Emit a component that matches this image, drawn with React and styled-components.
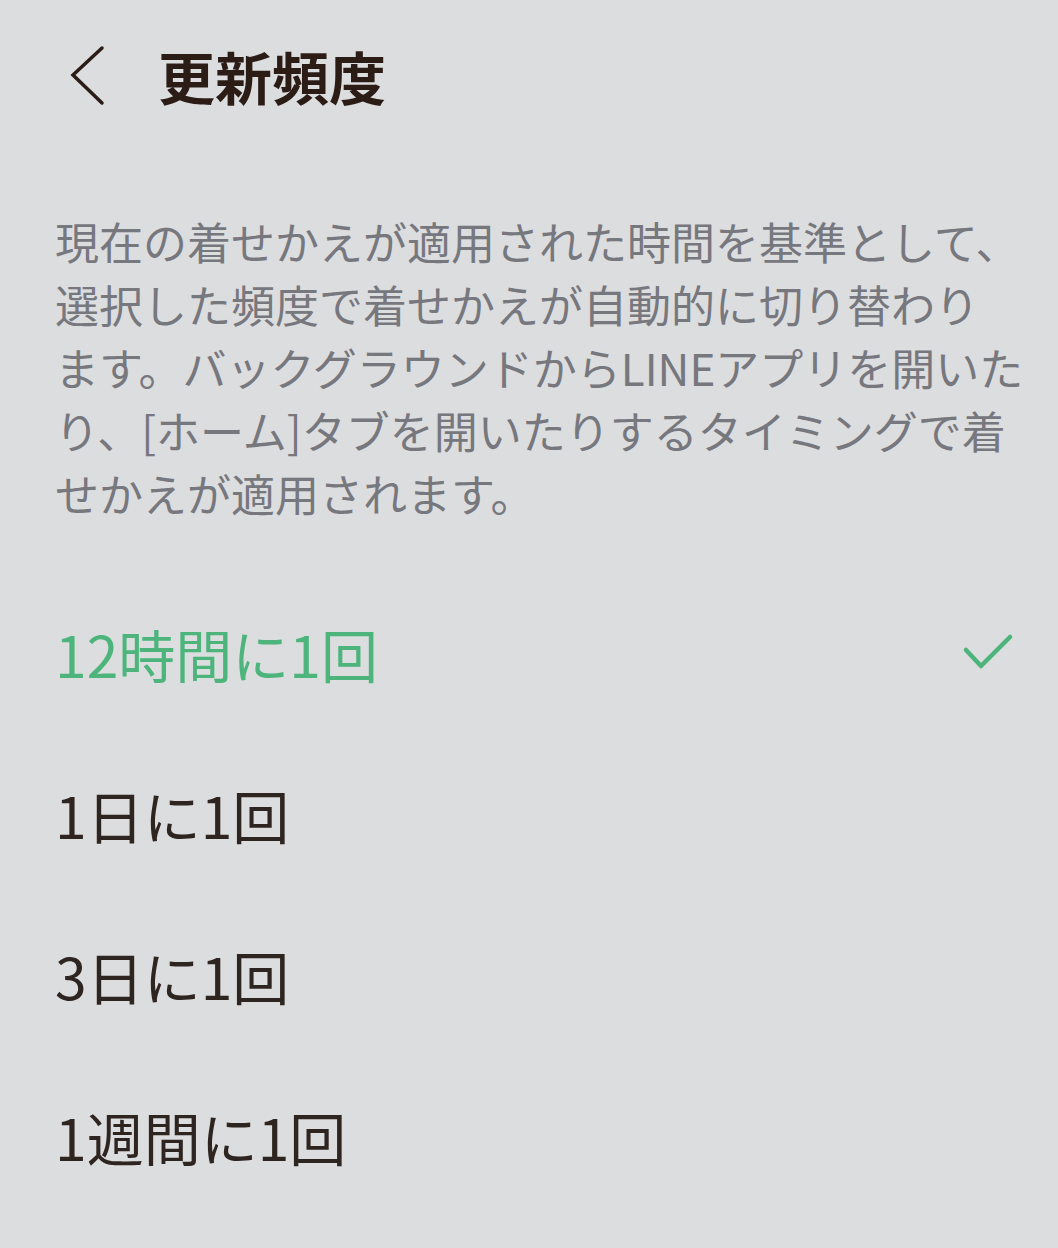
import React from "react";
import styled, { createGlobalStyle } from "styled-components";

const Global = createGlobalStyle`
  html, body { margin: 0; padding: 0; background: #dcdddf; }
  body { font-family: "Noto Sans CJK JP", "Noto Sans", sans-serif; }
`;

const Page = styled.div`
  width: 1058px;
  min-height: 1248px;
  background: #dcdddf;
  display: flex;
  flex-direction: column;
`;

const Header = styled.header`
  height: 155px;
  display: flex;
  align-items: center;
  padding: 0 0 0 66px;
  box-sizing: border-box;
  gap: 50px;
`;

const BackButton = styled.button`
  border: none;
  background: none;
  padding: 0;
  width: 42px;
  height: 62px;
  display: flex;
  align-items: center;
  justify-content: center;
  margin-top: -4px;
`;

const Title = styled.h1`
  margin: 0;
  font-size: 57px;
  font-weight: 700;
  color: #2b1c16;
  line-height: 1;
  margin-top: -4px;
`;

const Description = styled.p`
  margin: 55px 0 0;
  padding: 0 30px 0 55px;
  font-size: 44px;
  line-height: 63px;
  color: #77777e;
  white-space: nowrap;
`;

const List = styled.ul`
  list-style: none;
  margin: 47px 0 0;
  padding: 0;
  display: flex;
  flex-direction: column;
`;

const Row = styled.li`
  height: 161px;
  display: flex;
  align-items: center;
  justify-content: space-between;
  padding: 0 44px 0 55px;
  font-size: 57px;
  color: ${(p) => (p.$selected ? "#4db57b" : "#2e2420")};
`;

const Check = styled.svg`
  width: 52px;
  height: 40px;
`;

const lines = [
  "現在の着せかえが適用された時間を基準として、",
  "選択した頻度で着せかえが自動的に切り替わり",
  "ます。バックグラウンドからLINEアプリを開いた",
  "り、[ホーム]タブを開いたりするタイミングで着",
  "せかえが適用されます。",
];

const options = ["12時間に1回", "1日に1回", "3日に1回", "1週間に1回"];

export default function App() {
  return (
    <Page>
      <Global />
      <Header>
        <BackButton aria-label="戻る">
          <svg width="40" height="62" viewBox="0 0 40 62">
            <polyline
              points="35,3 6,30 35,58"
              fill="none"
              stroke="#2b1c16"
              strokeWidth="3.5"
              strokeLinecap="round"
              strokeLinejoin="miter"
            />
          </svg>
        </BackButton>
        <Title>更新頻度</Title>
      </Header>
      <Description>
        {lines.map((l, i) => (
          <React.Fragment key={i}>
            {l}
            {i < lines.length - 1 && <br />}
          </React.Fragment>
        ))}
      </Description>
      <List>
        {options.map((o, i) => (
          <Row key={o} $selected={i === 0}>
            <span>{o}</span>
            {i === 0 && (
              <Check viewBox="0 0 52 40">
                <polyline
                  points="4,17 19,33 48,4"
                  fill="none"
                  stroke="#4db57b"
                  strokeWidth="4.5"
                  strokeLinecap="round"
                  strokeLinejoin="round"
                />
              </Check>
            )}
          </Row>
        ))}
      </List>
    </Page>
  );
}
